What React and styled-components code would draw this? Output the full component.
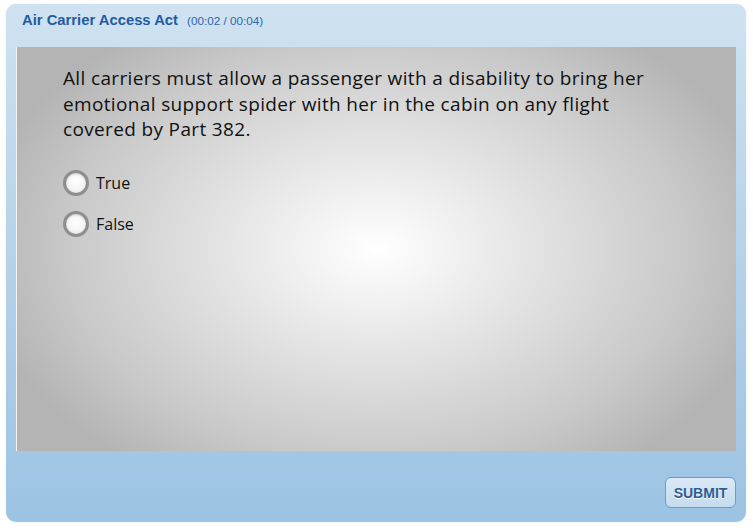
import React, { useState } from 'react';
import styled, { createGlobalStyle } from 'styled-components';

const GlobalStyle = createGlobalStyle`
  html, body {
    margin: 0;
    padding: 0;
    background: #ffffff;
  }
  body {
    font-family: "Liberation Sans", Arial, sans-serif;
  }
`;

const Page = styled.div`
  width: 753px;
  height: 531px;
  padding: 4px 7px 9px 6px;
  box-sizing: border-box;
`;

const Panel = styled.div`
  height: 100%;
  display: flex;
  flex-direction: column;
  border-radius: 10px;
  background: linear-gradient(to bottom, #cfe2f1 0%, #b7d3ea 45%, #9cc3e3 100%);
  box-shadow: 0 0 1px rgba(120, 160, 200, 0.6);
  padding: 0 10px 0 10px;
`;

const Header = styled.div`
  height: 43px;
  display: flex;
  align-items: center;
  padding-left: 6px;
  padding-bottom: 11px;
  box-sizing: border-box;
`;

const Title = styled.span`
  font-weight: bold;
  font-size: 14.8px;
  color: #1f5c9f;
`;

const Timer = styled.span`
  font-size: 11.7px;
  color: #2e67a8;
  margin-left: 9px;
`;

const Stage = styled.div`
  height: 404px;
  background: radial-gradient(ellipse 400px 270px at 50% 50%, #ffffff 0%, #e3e3e3 40%, #c8c8c8 78%, #b4b4b4 100%);
  border-left: 1px solid #f4f4f4;
  padding: 19px 40px 0 46px;
  box-sizing: border-box;
`;

const Question = styled.p`
  margin: 0 0 27px;
  max-width: 600px;
  font-family: "Open Sans", "Noto Sans", sans-serif;
  font-size: 19px;
  line-height: 25.5px;
  color: #111111;
  letter-spacing: 0.35px;
`;

const Options = styled.div`
  display: flex;
  flex-direction: column;
  gap: 15px;
`;

const Option = styled.label`
  display: flex;
  align-items: center;
  gap: 7px;
  cursor: pointer;
  font-family: "Open Sans", "Noto Sans", sans-serif;
  font-size: 16px;
  color: #111111;
`;

const Radio = styled.span`
  width: 20px;
  height: 20px;
  border-radius: 50%;
  border: 3px solid #8e8e8e;
  background: radial-gradient(circle at 50% 40%, #ffffff 0%, #f4f4f4 55%, #dedede 100%);
  box-shadow: inset 0 1px 2px rgba(0, 0, 0, 0.15);
  position: relative;
  &::after {
    content: '';
    position: absolute;
    inset: 5px;
    border-radius: 50%;
    background: ${(p) => (p.checked ? '#3a6ea5' : 'transparent')};
  }
`;

const Footer = styled.div`
  flex: 1;
  display: flex;
  align-items: flex-end;
  justify-content: flex-end;
  padding: 0 0 14px;
`;

const SubmitButton = styled.button`
  width: 71px;
  height: 31px;
  border-radius: 6px;
  border: 1px solid #6d9ccb;
  background: linear-gradient(to bottom, #dbe9f5 0%, #c4dbef 100%);
  color: #2c5d95;
  font-family: "Liberation Sans", Arial, sans-serif;
  font-weight: bold;
  font-size: 14px;
  text-shadow: 0 1px 0 #ffffff;
  cursor: pointer;
  padding: 0;
`;

const options = ['True', 'False'];

const App = () => {
  const [answer, setAnswer] = useState(null);
  return (
    <>
      <GlobalStyle />
      <Page>
        <Panel>
          <Header>
            <Title>Air Carrier Access Act</Title>
            <Timer>(00:02 / 00:04)</Timer>
          </Header>
          <Stage>
            <Question>
              All carriers must allow a passenger with a disability to bring her emotional support spider with
              her in the cabin on any flight covered by Part 382.
            </Question>
            <Options>
              {options.map((opt) => (
                <Option key={opt} onClick={() => setAnswer(opt)}>
                  <Radio checked={answer === opt} />
                  {opt}
                </Option>
              ))}
            </Options>
          </Stage>
          <Footer>
            <SubmitButton>SUBMIT</SubmitButton>
          </Footer>
        </Panel>
      </Page>
    </>
  );
};

export default App;
